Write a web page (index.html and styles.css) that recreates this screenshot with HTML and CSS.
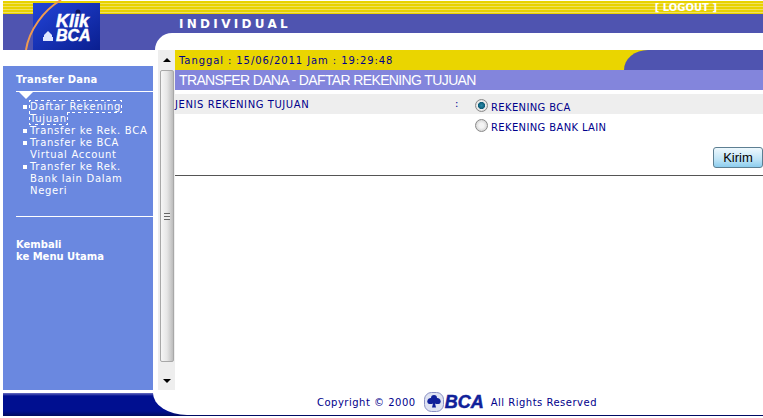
FILE: index.html
```html
<!DOCTYPE html>
<html lang="en">
<head>
  <meta charset="UTF-8">
  <title>KlikBCA Individual</title>
  <link rel="stylesheet" href="styles.css">
</head>
<body>
  <!-- Header -->
  <header class="header">
    <div class="stripes">
      <a class="logout" href="#">[ LOGOUT ]</a>
    </div>
    <div class="band">
      <div class="band-title">INDIVIDUAL</div>
      <div class="band-curve"></div>
    </div>
    <svg class="logo" width="76" height="50" viewBox="0 0 76 50">
      <defs>
        <linearGradient id="logoBlue" x1="0" y1="0" x2="1" y2="1">
          <stop offset="0" stop-color="#2244d8"/>
          <stop offset="1" stop-color="#0a1f90"/>
        </linearGradient>
      </defs>
      <rect x="9" y="3" width="67" height="47" fill="url(#logoBlue)"/>
      <path d="M2 50C5 30 20 10 37 0" fill="none" stroke="#f09a50" stroke-width="2"/>
      <circle cx="54" cy="12" r="2.500" fill="#10145a"/>
      <text x="32" y="27" class="logo-klik">Klik</text>
      <text x="32" y="41" class="logo-bca">BCA</text>
      <path d="M24 31l4 4v2h1v4h-10v-4h1v-2z" fill="#dfe6ff"/>
    </svg>
  </header>

  <div class="main">
    <!-- Sidebar -->
    <nav class="sidebar">
      <h3 class="side-title">Transfer Dana</h3>
      <div class="side-pointer"></div>
      <ul class="side-menu">
        <li><a class="current" href="#">Daftar Rekening Tujuan</a></li>
        <li><a href="#">Transfer ke Rek. BCA</a></li>
        <li><a href="#">Transfer ke BCA Virtual Account</a></li>
        <li><a href="#">Transfer ke Rek. Bank lain Dalam Negeri</a></li>
      </ul>
      <a class="side-back" href="#">Kembali<br>ke Menu Utama</a>
    </nav>

    <!-- Scrollbar of the content frame -->
    <div class="scrollbar">
      <div class="arrow-up"></div>
      <div class="thumb"><div class="grip"></div></div>
      <div class="arrow-down"></div>
    </div>

    <!-- Content -->
    <main class="content">
      <div class="date-bar">
        <span class="date-text">Tanggal : 15/06/2011 Jam : 19:29:48</span>
        <div class="date-cap"></div>
      </div>
      <h1 class="page-title">TRANSFER DANA - DAFTAR REKENING TUJUAN</h1>
      <form class="account-form">
        <div class="form-row shaded">
          <div class="form-label">JENIS REKENING TUJUAN</div>
          <div class="form-colon">:</div>
          <label class="form-option"><input type="radio" name="tujuan" checked> REKENING BCA</label>
        </div>
        <div class="form-row">
          <div class="form-label"></div>
          <div class="form-colon"></div>
          <label class="form-option"><input type="radio" name="tujuan"> REKENING BANK LAIN</label>
        </div>
        <div class="form-actions">
          <button type="button" class="btn-send">Kirim</button>
        </div>
      </form>
    </main>
  </div>

  <!-- Footer -->
  <footer class="footer">
    <div class="footer-side"></div>
    <div class="footer-main">
      <span>Copyright © 2000</span>
      <svg class="bca-mark" width="20" height="20" viewBox="0 0 20 20">
        <rect x="0.5" y="0.5" width="19" height="19" rx="7" fill="#dfe3f2" stroke="#8a90c4"/>
        <path d="M10 3a3 3 0 0 1 3 3 3.400 3.400 0 0 1 3 5.500q-3 1-5 0l1 4h-4l1-4q-2 1-5 0a3.400 3.400 0 0 1 3-5.500 3 3 0 0 1 3-3z" fill="#10219a"/>
      </svg>
      <span class="bca-word">BCA</span>
      <span>All Rights Reserved</span>
    </div>
  </footer>
</body>
</html>
```

FILE: styles.css
```css
/* General Styles */
html,
body {
  margin: 0;
  height: 418px;
  overflow: hidden;
}

body {
  padding: 1px 0 0 3px;
  box-sizing: border-box;
  background: #ffffff;
  font-family: 'DejaVu Sans', Verdana, sans-serif;
  font-size: 10px;
  letter-spacing: 0.5px;
  color: #00008b;
}

a {
  color: inherit;
  text-decoration: none;
}

/* Header */
.header {
  position: relative;
  height: 49px;
}

.stripes {
  height: 13px;
  display: flex;
  justify-content: flex-end;
  background: repeating-linear-gradient(#e8d200 0, #e8d200 2px, #f0e060 2px, #f0e060 3px);
}

.logout {
  margin-right: 46px;
  font-size: 10px;
  line-height: 13px;
  font-weight: bold;
  color: #ffffff;
  letter-spacing: 0;
}

.band {
  height: 36px;
  background: #4f54b0;
  display: flex;
  flex-direction: column;
}

.band-title {
  height: 19px;
  padding-left: 176px;
  font-size: 12px;
  line-height: 20px;
  font-weight: bold;
  letter-spacing: 3.3px;
  color: #ffffff;
}

.band-curve {
  flex: 1;
  margin-left: 152px;
  background: #ffffff;
  border-top-left-radius: 24px;
}

.logo {
  position: absolute;
  left: 21px;
  top: -1px;
}

.logo-klik,
.logo-bca {
  font-family: 'Liberation Sans', Arial, sans-serif;
  font-weight: bold;
  font-style: italic;
  fill: #ffffff;
  stroke: #ffffff;
  stroke-width: 0.5px;
  letter-spacing: 0;
}

.logo-klik {
  font-size: 18px;
}

.logo-bca {
  font-size: 16px;
}

/* Main layout */
.main {
  display: flex;
  height: 343px;
}

/* Sidebar */
.sidebar {
  width: 150px;
  height: 324px;
  margin-top: 16px;
  flex-shrink: 0;
  background: #6a88e0;
  color: #ffffff;
  box-sizing: border-box;
  padding-left: 13px;
}

.side-title {
  margin: 0;
  height: 25px;
  line-height: 27px;
  font-size: 10px;
  font-weight: bold;
  letter-spacing: 0.2px;
  border-bottom: 1px solid #ffffff;
}

.side-pointer {
  width: 0;
  margin-left: 3px;
  border-left: 7px solid transparent;
  border-right: 7px solid transparent;
  border-top: 7px solid #ffffff;
}

.side-menu {
  list-style: none;
  margin: 0;
  padding: 2px 3px 20px 14px;
  height: 95px;
  border-bottom: 1px solid #ffffff;
  line-height: 12px;
  letter-spacing: 0.7px;
}

.side-menu li {
  position: relative;
}

.side-menu li::before {
  content: "";
  position: absolute;
  left: -7px;
  top: 4px;
  width: 4px;
  height: 4px;
  background: #ffffff;
}

.current {
  outline: 1px dotted #ffffff;
}

.side-back {
  display: block;
  margin-top: 22px;
  font-weight: bold;
  line-height: 12px;
  letter-spacing: 0;
}

/* Scrollbar */
.scrollbar {
  width: 17px;
  height: 340px;
  margin-left: 5px;
  flex-shrink: 0;
  display: flex;
  flex-direction: column;
  align-items: center;
  background: #eeeeee;
}

.arrow-up,
.arrow-down {
  width: 0;
  border-left: 4px solid transparent;
  border-right: 4px solid transparent;
}

.arrow-up {
  margin: 8px 0 8px;
  border-bottom: 4px solid #000000;
}

.arrow-down {
  margin: 17px 0 7px;
  border-top: 4px solid #000000;
}

.thumb {
  flex: 1;
  width: 14px;
  margin-left: 1px;
  display: flex;
  align-items: center;
  justify-content: center;
  box-sizing: border-box;
  border: 1px solid #a8a8a8;
  border-radius: 2px;
  background: linear-gradient(90deg, #f6f6f6, #e6e6e6 50%, #bcbcbc);
}

.grip {
  width: 6px;
  height: 5px;
  border-top: 1px solid #666666;
  border-bottom: 1px solid #666666;
  background: linear-gradient(#eeeeee 2px, #666666 2px, #666666 3px, #eeeeee 3px);
}

/* Content */
.content {
  flex: 1;
  min-width: 0;
}

.date-bar {
  height: 20px;
  display: flex;
  justify-content: space-between;
  background: #ead500;
}

.date-text {
  padding-left: 4px;
  line-height: 21px;
  letter-spacing: 0.91px;
}

.date-cap {
  width: 139px;
  background: #4f54b0;
  border-top-left-radius: 24px 20px;
}

.page-title {
  margin: 0;
  height: 20px;
  padding-left: 4px;
  background: #8385dc;
  font-family: 'Liberation Sans', Arial, sans-serif;
  font-size: 14px;
  font-weight: normal;
  line-height: 21px;
  letter-spacing: -0.63px;
  color: #ffffff;
}

/* Form Styles */
.account-form {
  padding-top: 4px;
  border-bottom: 1px solid #555555;
  height: 81px;
}

.form-row {
  height: 20px;
  display: grid;
  grid-template-columns: 280px 20px 1fr;
}

.form-row.shaded {
  background: #eeeeee;
}

.form-label {
  line-height: 22px;
  letter-spacing: 0.57px;
}

.form-colon {
  line-height: 20px;
}

.form-option {
  display: flex;
  align-items: center;
  gap: 3px;
  line-height: 28px;
  letter-spacing: 0.36px;
}

.form-option input {
  appearance: none;
  width: 13px;
  height: 13px;
  margin: -6px 0 0;
  border: 1px solid #8a8a8a;
  border-radius: 50%;
  background: radial-gradient(circle, #f4f4f4 30%, #c4c4c4);
}

.form-option input:checked {
  background: radial-gradient(circle, #2a8aa8 0, #0c5c78 42%, #f0f0f0 50%, #c4c4c4);
}

.form-actions {
  display: flex;
  justify-content: flex-end;
  padding-top: 13px;
}

.btn-send {
  width: 50px;
  height: 21px;
  padding: 0;
  border: 1px solid #5d7f92;
  border-radius: 3px;
  background: linear-gradient(#eef8fd, #bfe4f6 60%, #8ccdee);
  font-family: 'Liberation Sans', Arial, sans-serif;
  font-size: 13px;
  color: #000000;
}

/* Footer */
.footer {
  height: 23px;
  display: flex;
  background: linear-gradient(#6a6fc0 0, #000f90 3px, #000f90 18px, #000a60 23px);
}

.footer-side {
  width: 150px;
  flex-shrink: 0;
}

.footer-main {
  flex: 1;
  height: 22px;
  box-sizing: border-box;
  background: #ffffff;
  border-bottom-left-radius: 34px 22px;
  display: flex;
  align-items: center;
  gap: 8px;
  padding: 0 0 4px 164px;
}

.bca-mark {
  flex-shrink: 0;
}

.bca-word {
  margin-left: -7px;
  margin-right: -1px;
  font-family: 'Liberation Sans', Arial, sans-serif;
  font-size: 18px;
  font-weight: bold;
  font-style: italic;
  letter-spacing: 0;
  color: #10219a;
  -webkit-text-stroke: 0.5px #10219a;
}
```
